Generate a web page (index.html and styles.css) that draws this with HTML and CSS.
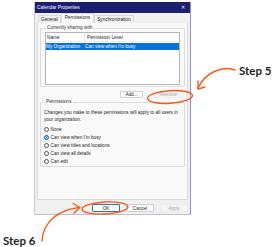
FILE: index.html
```html
<!DOCTYPE html>
<html lang="en">
<head>
    <meta charset="UTF-8">
    <meta name="viewport" content="width=device-width, initial-scale=1.0">
    <title>Calendar Properties</title>
    <link rel="stylesheet" href="styles.css">
</head>
<body>

  <div class="dialog">
    <div class="titlebar">
      <span>Calendar Properties</span>
      <span class="close">&#x2715;</span>
    </div>

    <div class="tabs">
      <span class="tab">General</span>
      <span class="tab active">Permissions</span>
      <span class="tab">Synchronization</span>
    </div>

    <div class="panel">
      <fieldset class="group share">
        <legend>Currently sharing with</legend>
        <div class="list">
          <div class="list-head">
            <span class="col-name">Name</span>
            <span class="col-level">Permission Level</span>
          </div>
          <div class="list-row selected">
            <span class="col-name">My Organization</span>
            <span class="col-level">Can view when I'm busy</span>
          </div>
        </div>
      </fieldset>

      <div class="actions">
        <button type="button" class="btn add">Add...</button>
        <button type="button" class="btn remove" disabled>Remove</button>
      </div>

      <fieldset class="group perms">
        <legend>Permissions</legend>
        <p>Changes you make to these permissions will apply to all users in your organization.</p>
        <!-- permission levels -->
        <div class="radio"><span class="dot"></span>None</div>
        <div class="radio"><span class="dot checked"></span>Can view when I'm busy</div>
        <div class="radio"><span class="dot"></span>Can view titles and locations</div>
        <div class="radio"><span class="dot"></span>Can view all details</div>
        <div class="radio"><span class="dot"></span>Can edit</div>
      </fieldset>
    </div>

    <div class="footer">
      <button type="button" class="btn default">OK</button>
      <button type="button" class="btn">Cancel</button>
      <button type="button" class="btn" disabled>Apply</button>
    </div>
  </div>

  <!-- hand drawn annotations -->
  <svg class="marks" width="275" height="247" viewBox="0 0 275 247">
    <ellipse cx="170" cy="97" rx="22.5" ry="6.3" transform="rotate(-4 170 97)"/>
    <path d="M235 70 C 222 65, 205 73, 198 88"/>
    <path d="M198 81 L198 89 L205 87"/>
    <ellipse cx="105" cy="208" rx="23" ry="6" transform="rotate(-3 105 208)"/>
    <path d="M42 241 C 43 222, 58 210, 79 207.5"/>
    <path d="M73 203.5 L80 207.5 L74 213"/>
  </svg>

  <div class="step step5">Step 5</div>
  <div class="step step6">Step 6</div>

</body>
</html>
```

FILE: styles.css
```css
body {
    margin: 0;
    width: 275px;
    height: 247px;
    position: relative;
    overflow: hidden;
    background: #ffffff;
    font-family: "Liberation Sans", Arial, sans-serif;
    font-size: 4.7px;
    color: #222;
}

.dialog {
    margin: 2px 0 0 34px;
    width: 157px;
    height: 213px;
    background: #f0f0f0;
    border-left: 1px solid #c9c9d4;
    border-right: 1px solid #8f92c9;
    border-bottom: 1px solid #c0c0cc;
    display: flex;
    flex-direction: column;
    box-sizing: border-box;
}

.titlebar {
    height: 11px;
    background: #1c1f6e;
    color: #fff;
    display: flex;
    align-items: center;
    justify-content: space-between;
    padding: 0 5px 0 2px;
    font-size: 4.8px;
}

.close {
    font-size: 4.5px;
}

.tabs {
    display: flex;
    align-items: flex-end;
    height: 10px;
    padding-left: 3px;
}

.tab {
    height: 8px;
    line-height: 8px;
    padding: 0 2px;
    border: 1px solid #d9d9d9;
    border-bottom: none;
    box-sizing: border-box;
}

.tab.active {
    height: 10px;
    line-height: 7px;
    background: #f9f9f9;
    padding: 0 3px;
}

.panel {
    margin: 0 2px;
    height: 177px;
    background: #f9f9f9;
    border: 1px solid #d9d9d9;
    border-top: none;
    padding-top: 2px;
    box-sizing: border-box;
}

.group {
    margin: 0 2px;
    padding: 1px 4px 1px;
    border: 1px solid #dcdcdc;
    border-radius: 1px;
    min-width: 0;
}

.group legend {
    padding: 0 1px;
    line-height: 6px;
    color: #333;
    margin-left: 1px;
}

.list {
    height: 53px;
    background: #fff;
    border: 1px solid #b4b4b4;
    box-sizing: border-box;
}

.list-head,
.list-row {
    display: flex;
    white-space: nowrap;
}

.list-head {
    height: 9px;
    line-height: 9px;
    border-bottom: 1px solid #eeeeee;
    box-sizing: border-box;
}

.list-head .col-name {
    border-right: 1px solid #e5e5e5;
}

.col-name {
    width: 37px;
    padding-left: 1px;
    flex: none;
}

.col-level {
    padding-left: 2px;
}

.list-row {
    height: 7px;
    line-height: 7px;
    margin-top: 1px;
}

.list-row.selected {
    background: #0a72d6;
    color: #fff;
}

.list-row .col-name {
    padding-left: 0;
}

.actions {
    display: flex;
    justify-content: flex-end;
    gap: 10px;
    padding-right: 3px;
    margin-top: 4px;
}

.btn {
    font-family: inherit;
    font-size: 4.6px;
    height: 7px;
    padding: 0;
    background: #fdfdfd;
    border: 1px solid #cfcfcf;
    border-radius: 1px;
    color: #222;
    line-height: 5px;
}

.btn.add {
    width: 23px;
}

.btn.remove {
    width: 31px;
}

.btn:disabled {
    background: #f5f5f5;
    border-color: #ececec;
    color: #a8a8a8;
}

.perms {
    margin-top: 1px;
    padding: 4px 4px 1px 3px;
}

.perms p {
    margin: 0 0 3px;
    line-height: 7px;
}

.radio {
    display: flex;
    align-items: center;
    height: 7.8px;
    white-space: nowrap;
}

.dot {
    width: 5px;
    height: 5px;
    border: 0.7px solid #555;
    border-radius: 50%;
    box-sizing: border-box;
    margin-right: 1.5px;
    background: #fff;
    flex: none;
}

.dot.checked {
    border: 1.4px solid #0a67c6;
    background: #0a67c6;
    box-shadow: inset 0 0 0 0.8px #fff;
}

.footer {
    flex: 1;
    display: flex;
    justify-content: flex-end;
    gap: 6px;
    padding: 4px 2px 0 0;
    box-sizing: border-box;
}

.footer .btn {
    width: 28px;
    height: 8px;
}

.footer .btn.default {
    border-color: #2a6fc7;
}

.marks {
    position: absolute;
    top: 0;
    left: 0;
    pointer-events: none;
}

.marks ellipse,
.marks path {
    fill: none;
    stroke: #fa5a19;
    stroke-width: 1.4;
    stroke-linecap: round;
    stroke-linejoin: round;
}

.step {
    position: absolute;
    font-family: Lato, "Open Sans", sans-serif;
    font-weight: 700;
    font-size: 11.5px;
    line-height: 11px;
    color: #1e1e1e;
}

.step5 {
    left: 239px;
    top: 65px;
}

.step6 {
    left: 3px;
    top: 235px;
}
```
